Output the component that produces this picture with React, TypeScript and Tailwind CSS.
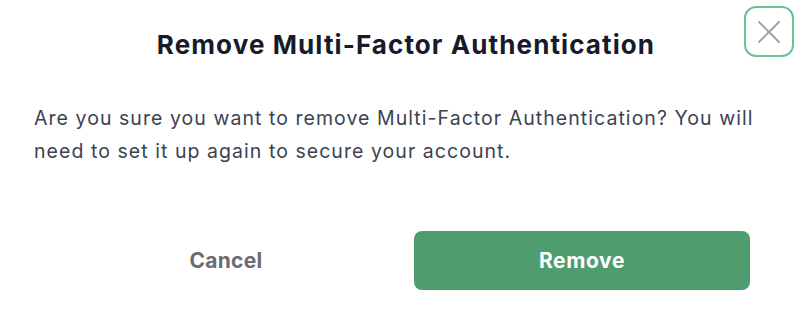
import React from "react";

export default function App() {
  return (
    <div className="w-[808px] h-[330px] bg-white relative" style={{ fontFamily: "Inter, 'Noto Sans', sans-serif" }}>
      <button className="absolute left-[744px] top-[6px] w-[50px] h-[51px] rounded-[12px] border-[2.5px] border-[#6cc190] flex items-center justify-center">
        <svg width="24" height="24" viewBox="0 0 24 24" fill="none" stroke="#9a9ca8" strokeWidth="1.8" strokeLinecap="round">
          <path d="M2 2 L22 22 M22 2 L2 22" />
        </svg>
      </button>
      <div className="flex flex-col pl-[34px] pr-[30px] pt-[29px]">
        <h1 className="text-center text-[26px] leading-[32px] font-bold text-[#161b2b] tracking-[1.1px]">
          Remove Multi-Factor Authentication
        </h1>
        <p className="mt-[41px] text-[19.5px] leading-[33px] text-[#3b4352] tracking-[1.05px]">
          Are you sure you want to remove Multi-Factor Authentication? You will need to set it up again to secure your account.
        </p>
        <div className="mt-[63px] flex gap-[20px] pl-[24px]">
          <button className="w-[336px] h-[59px] rounded-[8px] text-[21px] font-bold text-[#6b6b73] tracking-[0.3px]">Cancel</button>
          <button className="w-[336px] h-[59px] rounded-[8px] bg-[#4f9d6f] text-[21px] font-bold text-white tracking-[0.6px]">Remove</button>
        </div>
      </div>
    </div>
  );
}
